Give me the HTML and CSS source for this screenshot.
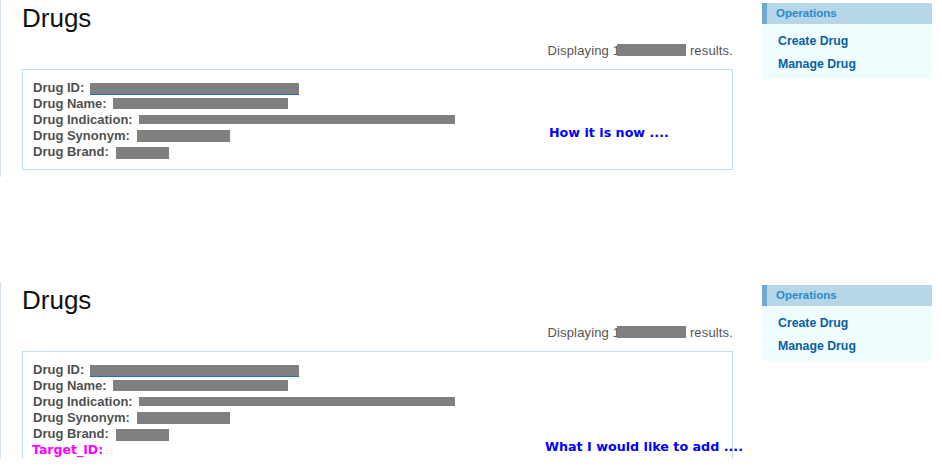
FILE: index.html
```html
<!DOCTYPE html>
<html>
<head>
<meta charset="utf-8">
<title>Drugs</title>
<link rel="stylesheet" href="styles.css">
</head>
<body>
<section class="shot shot-first">
  <div class="main">
    <h1 class="title">Drugs</h1>
    <div class="summary">Displaying 1<span class="redact r-count"></span> results.</div>
    <div class="view">
      <div class="row"><b>Drug ID:</b> <a class="id-link" href="#"><span class="redact r-id"></span></a></div>
      <div class="row"><b>Drug Name:</b> <span class="redact r-name"></span></div>
      <div class="row"><b>Drug Indication:</b> <span class="redact r-ind"></span></div>
      <div class="row"><b>Drug Synonym:</b> <span class="redact r-syn"></span></div>
      <div class="row"><b>Drug Brand:</b> <span class="redact r-brand"></span></div>
      <div class="note note-now">How it is now ....</div>
    </div>
  </div>
  <aside class="sidebar">
    <div class="portlet-title">Operations</div>
    <ul class="ops">
      <li><a href="#">Create Drug</a></li>
      <li><a href="#">Manage Drug</a></li>
    </ul>
  </aside>
</section>
<section class="shot">
  <div class="main">
    <h1 class="title">Drugs</h1>
    <div class="summary">Displaying 1<span class="redact r-count"></span> results.</div>
    <div class="view">
      <div class="row"><b>Drug ID:</b> <a class="id-link" href="#"><span class="redact r-id"></span></a></div>
      <div class="row"><b>Drug Name:</b> <span class="redact r-name"></span></div>
      <div class="row"><b>Drug Indication:</b> <span class="redact r-ind"></span></div>
      <div class="row"><b>Drug Synonym:</b> <span class="redact r-syn"></span></div>
      <div class="row"><b>Drug Brand:</b> <span class="redact r-brand"></span></div>
      <div class="row target">Target_ID:</div>
      <div class="note note-add">What I would like to add ....</div>
    </div>
  </div>
  <aside class="sidebar">
    <div class="portlet-title">Operations</div>
    <ul class="ops">
      <li><a href="#">Create Drug</a></li>
      <li><a href="#">Manage Drug</a></li>
    </ul>
  </aside>
</section>
</body>
</html>
```
FILE: styles.css
```css
html, body {
  margin: 0;
  padding: 0;
  background: #ffffff;
}
body {
  font-family: "Liberation Sans", Arial, sans-serif;
  font-size: 13px;
  color: #555555;
}
.shot {
  display: flex;
  align-items: flex-start;
}
.shot-first {
  height: 282px;
}
.main {
  box-sizing: border-box;
  width: 733px;
  height: 177px;
  padding: 3px 0 0 21px;
  border-left: 1px solid #d3e2eb;
}
.title {
  margin: 0;
  font-size: 26px;
  line-height: 30px;
  font-weight: normal;
  color: #111111;
}
.summary {
  margin-top: 10px;
  text-align: right;
  line-height: 16px;
  letter-spacing: 0.15px;
  color: #555555;
}
.redact {
  display: inline-block;
  background: #808080;
}
.r-count {
  width: 69px;
  height: 12px;
  margin-left: -3px;
  vertical-align: -1px;
}
.view {
  position: relative;
  margin-top: 10px;
  border: 1px solid #c6dde9;
  padding: 10px 10px 9px 10px;
}
.row {
  line-height: 16px;
  white-space: nowrap;
}
.row b {
  font-weight: bold;
  color: #505050;
}
.id-link {
  display: inline-block;
  margin-left: 2px;
  border-bottom: 1px solid #1a6fd1;
  line-height: 0;
  vertical-align: -2px;
}
.r-id { width: 209px; height: 11px; }
.r-name { width: 175px; height: 11px; margin-left: 3px; vertical-align: -1px; }
.r-ind { width: 316px; height: 9px; margin-left: 3px; vertical-align: 0; }
.r-syn { width: 93px; height: 12px; margin-left: 4px; vertical-align: -2px; }
.r-brand { width: 53px; height: 12px; margin-left: 4px; vertical-align: -3px; }
.target {
  margin-left: -1px;
  font-family: "DejaVu Sans", Verdana, sans-serif;
  font-weight: bold;
  font-size: 12.5px;
  color: #ff00ff;
}
.note {
  position: absolute;
  font-family: "DejaVu Sans", Verdana, sans-serif;
  font-weight: bold;
  font-size: 12.7px;
  line-height: 15px;
  color: #0000ff;
  white-space: nowrap;
}
.note-now {
  left: 526px;
  top: 55px;
}
.note-add {
  left: 522px;
  top: 87px;
}
.sidebar {
  width: 170px;
  margin-left: 29px;
  margin-top: 3px;
}
.portlet-title {
  height: 21px;
  line-height: 21px;
  padding-left: 9px;
  border-left: 5px solid #6ea8cf;
  background: #b7d6e7;
  color: #298acb;
  font-weight: bold;
  font-size: 11.5px;
}
.ops {
  list-style: none;
  margin: 0;
  padding: 6px 0 4px 16px;
  background: #effdff;
  font-size: 12.3px;
  line-height: 22.7px;
}
.ops li {
  height: 22.7px;
}
.ops a {
  font-weight: bold;
  color: #0a60a2;
  text-decoration: none;
}
```
